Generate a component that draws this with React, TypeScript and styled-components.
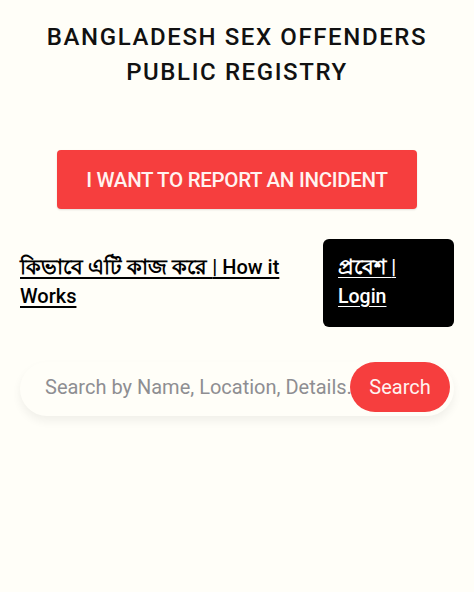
import React from "react";
import styled, { createGlobalStyle } from "styled-components";

const Global = createGlobalStyle`
  html, body { margin: 0; padding: 0; background: #fffef8; }
  body { font-family: Roboto, "Noto Sans", "Liberation Sans", sans-serif; }
  * { box-sizing: border-box; }
`;

const Page = styled.div`
  width: 474px;
  min-height: 592px;
  background: #fffef8;
  padding: 20px 20px 0 20px;
  display: flex;
  flex-direction: column;
`;

const Title = styled.h1`
  margin: 0;
  text-align: center;
  font-family: Roboto, sans-serif;
  font-weight: 500;
  font-size: 24px;
  line-height: 35px;
  letter-spacing: 1.6px;
  color: #111;
`;

const ReportButton = styled.button`
  align-self: center;
  margin-top: 60px;
  width: 360px;
  height: 59px;
  border: none;
  border-radius: 4px;
  background: #f63e3e;
  color: #fff3f0;
  font-family: Roboto, sans-serif;
  font-weight: 500;
  font-size: 20.5px;
  letter-spacing: -0.3px;
  box-shadow: 0 1px 2px rgba(0, 0, 0, 0.12);
`;

const LinksRow = styled.div`
  margin-top: 30px;
  display: flex;
  justify-content: space-between;
  align-items: flex-start;
`;

const HowLink = styled.a`
  width: 285px;
  margin-top: 14px;
  font-family: Roboto, sans-serif;
  font-weight: 500;
  font-size: 20px;
  line-height: 29px;
  color: #000;
  text-decoration: underline;
  text-underline-offset: 3px;
`;

const Bangla = styled.span`
  font-weight: 700;
  font-size: 1.07em;
  line-height: 1;
`;

const Latin = styled.span``;

const LoginBox = styled.div`
  width: 131px;
  height: 88px;
  background: #000;
  border-radius: 6px;
  padding: 14px 15px;
  font-family: Roboto, sans-serif;
  font-weight: 500;
  font-size: 19.5px;
  line-height: 29px;
`;

const LoginLink = styled.a`
  color: #fff;
  text-decoration: underline;
  text-underline-offset: 3px;
`;

const SearchBar = styled.form`
  margin-top: 35px;
  display: flex;
  align-items: flex-start;
  height: 54px;
  border-radius: 27px;
  background: #fffef8;
  box-shadow: 0 5px 10px rgba(0, 0, 0, 0.06);
  padding: 0 4px 0 25px;
`;

const SearchInput = styled.input`
  flex: 1;
  min-width: 0;
  height: 50px;
  border: none;
  outline: none;
  background: transparent;
  padding: 0;
  font-family: Roboto, sans-serif;
  font-size: 20px;
  color: #333;
  &::placeholder { color: #8e8e92; }
`;

const SearchButton = styled.button`
  flex: none;
  width: 100px;
  height: 50px;
  margin-left: -4px;
  border: none;
  border-radius: 25px;
  background: #f63e3e;
  color: #fff3f0;
  font-family: Roboto, sans-serif;
  font-size: 20px;
`;

export default function App() {
  return (
    <>
      <Global />
      <Page>
        <Title>
          BANGLADESH SEX OFFENDERS
          <br />
          PUBLIC REGISTRY
        </Title>
        <ReportButton>I WANT TO REPORT AN INCIDENT</ReportButton>
        <LinksRow>
          <HowLink href="#">
            <Bangla>কিভাবে এটি কাজ করে </Bangla>
            <Latin>| How it Works</Latin>
          </HowLink>
          <LoginBox>
            <LoginLink href="#">
              <Bangla>প্রবেশ </Bangla>
              <Latin>| Login</Latin>
            </LoginLink>
          </LoginBox>
        </LinksRow>
        <SearchBar onSubmit={(e) => e.preventDefault()}>
          <SearchInput placeholder="Search by Name, Location, Details..." />
          <SearchButton type="submit">Search</SearchButton>
        </SearchBar>
      </Page>
    </>
  );
}
